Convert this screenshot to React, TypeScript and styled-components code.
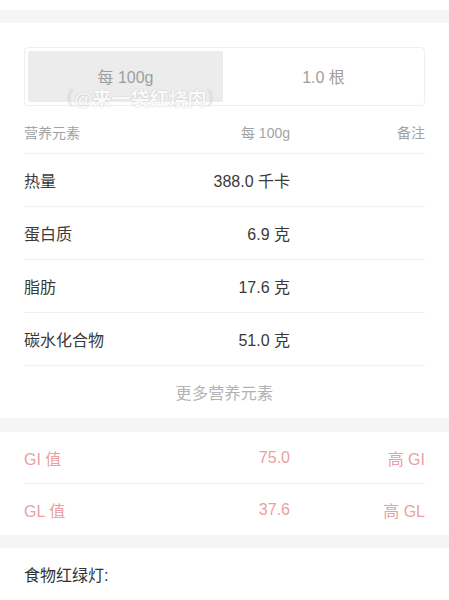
import React from "react";
import styled, { createGlobalStyle } from "styled-components";

const Global = createGlobalStyle`
  html, body { margin: 0; padding: 0; background: #ffffff; }
  body { font-family: "Liberation Sans", "Noto Sans CJK SC", sans-serif; -webkit-font-smoothing: antialiased; }
`;

const Page = styled.div`
  display: flex;
  flex-direction: column;
  width: 449px;
`;

const TopSpace = styled.div`
  height: 10px;
  background: #ffffff;
`;

const Band = styled.div<{ $h: number }>`
  height: ${(p) => p.$h}px;
  background: #f5f5f5;
`;

const Section = styled.div`
  padding: 0 24px;
  display: flex;
  flex-direction: column;
`;

const Segmented = styled.div`
  position: relative;
  margin-top: 24px;
  height: 59px;
  box-sizing: border-box;
  border: 1px solid #efefef;
  border-radius: 4px;
  padding: 3px;
  display: grid;
  grid-template-columns: 1fr 1fr;
  gap: 3px;
`;

const Tab = styled.div<{ $active?: boolean }>`
  display: flex;
  align-items: center;
  justify-content: center;
  border-radius: 2px;
  background: ${(p) => (p.$active ? "#ececec" : "#ffffff")};
  color: #9e9e9e;
  font-size: 16px;
  padding-bottom: 2px;
`;

const Watermark = styled.div`
  position: absolute;
  left: 30px;
  top: 36px;
  font-size: 19px;
  font-weight: 700;
  color: rgba(255, 255, 255, 0.95);
  text-shadow: 0 0 1px rgba(0, 0, 0, 0.18), 0 0 2px rgba(0, 0, 0, 0.08);
  white-space: nowrap;
`;

const Paren = styled.span`
  color: rgba(255, 255, 255, 0.6);
  font-weight: 400;
`;

const Grid = styled.div<{ $h: number; $border?: boolean }>`
  display: grid;
  grid-template-columns: 1fr 130px 135px;
  align-items: center;
  height: ${(p) => p.$h}px;
  box-sizing: border-box;
  border-bottom: ${(p) => (p.$border ? "1px solid #f1f1f1" : "none")};
`;

const HeaderGrid = styled(Grid)`
  padding-top: 5px;
`;

const Cell = styled.div<{ $align?: "left" | "right"; $tone: "head" | "body" | "pink" }>`
  text-align: ${(p) => p.$align || "left"};
  font-size: ${(p) => (p.$tone === "head" ? "14px" : "16px")};
  color: ${(p) =>
    p.$tone === "head" ? "#a3a3a3" : p.$tone === "pink" ? "#eaa0a2" : "#3a3a3a"};
  white-space: nowrap;
`;

const More = styled.div`
  height: 52px;
  display: flex;
  align-items: center;
  justify-content: center;
  color: #b3b3b3;
  font-size: 16px;
  letter-spacing: 0.3px;
`;

const Footer = styled.div`
  height: 52px;
  display: flex;
  align-items: center;
  padding: 0 24px;
  font-size: 16px;
  color: #333333;
`;

const rows = [
  { name: "热量", value: "388.0 千卡" },
  { name: "蛋白质", value: "6.9 克" },
  { name: "脂肪", value: "17.6 克" },
  { name: "碳水化合物", value: "51.0 克" },
];

const gi = [
  { name: "GI 值", value: "75.0", note: "高 GI" },
  { name: "GL 值", value: "37.6", note: "高 GL" },
];

export default function App() {
  return (
    <>
      <Global />
      <Page>
        <TopSpace />
        <Band $h={13} />
        <Section>
          <Segmented>
            <Tab $active>每 100g</Tab>
            <Tab>1.0 根</Tab>
            <Watermark>
              <Paren>（</Paren>@来一袋红烧肉<Paren>）</Paren>
            </Watermark>
          </Segmented>
          <HeaderGrid $h={48} $border>
            <Cell $tone="head">营养元素</Cell>
            <Cell $tone="head" $align="right">每 100g</Cell>
            <Cell $tone="head" $align="right">备注</Cell>
          </HeaderGrid>
          {rows.map((r) => (
            <Grid key={r.name} $h={53} $border>
              <Cell $tone="body">{r.name}</Cell>
              <Cell $tone="body" $align="right">{r.value}</Cell>
              <Cell $tone="body" $align="right"></Cell>
            </Grid>
          ))}
          <More>更多营养元素</More>
        </Section>
        <Band $h={14} />
        <Section>
          {gi.map((r, i) => (
            <Grid key={r.name} $h={i === 0 ? 52 : 51} $border={i === 0}>
              <Cell $tone="pink">{r.name}</Cell>
              <Cell $tone="pink" $align="right">{r.value}</Cell>
              <Cell $tone="pink" $align="right">{r.note}</Cell>
            </Grid>
          ))}
        </Section>
        <Band $h={13} />
        <Footer>食物红绿灯:</Footer>
      </Page>
    </>
  );
}
